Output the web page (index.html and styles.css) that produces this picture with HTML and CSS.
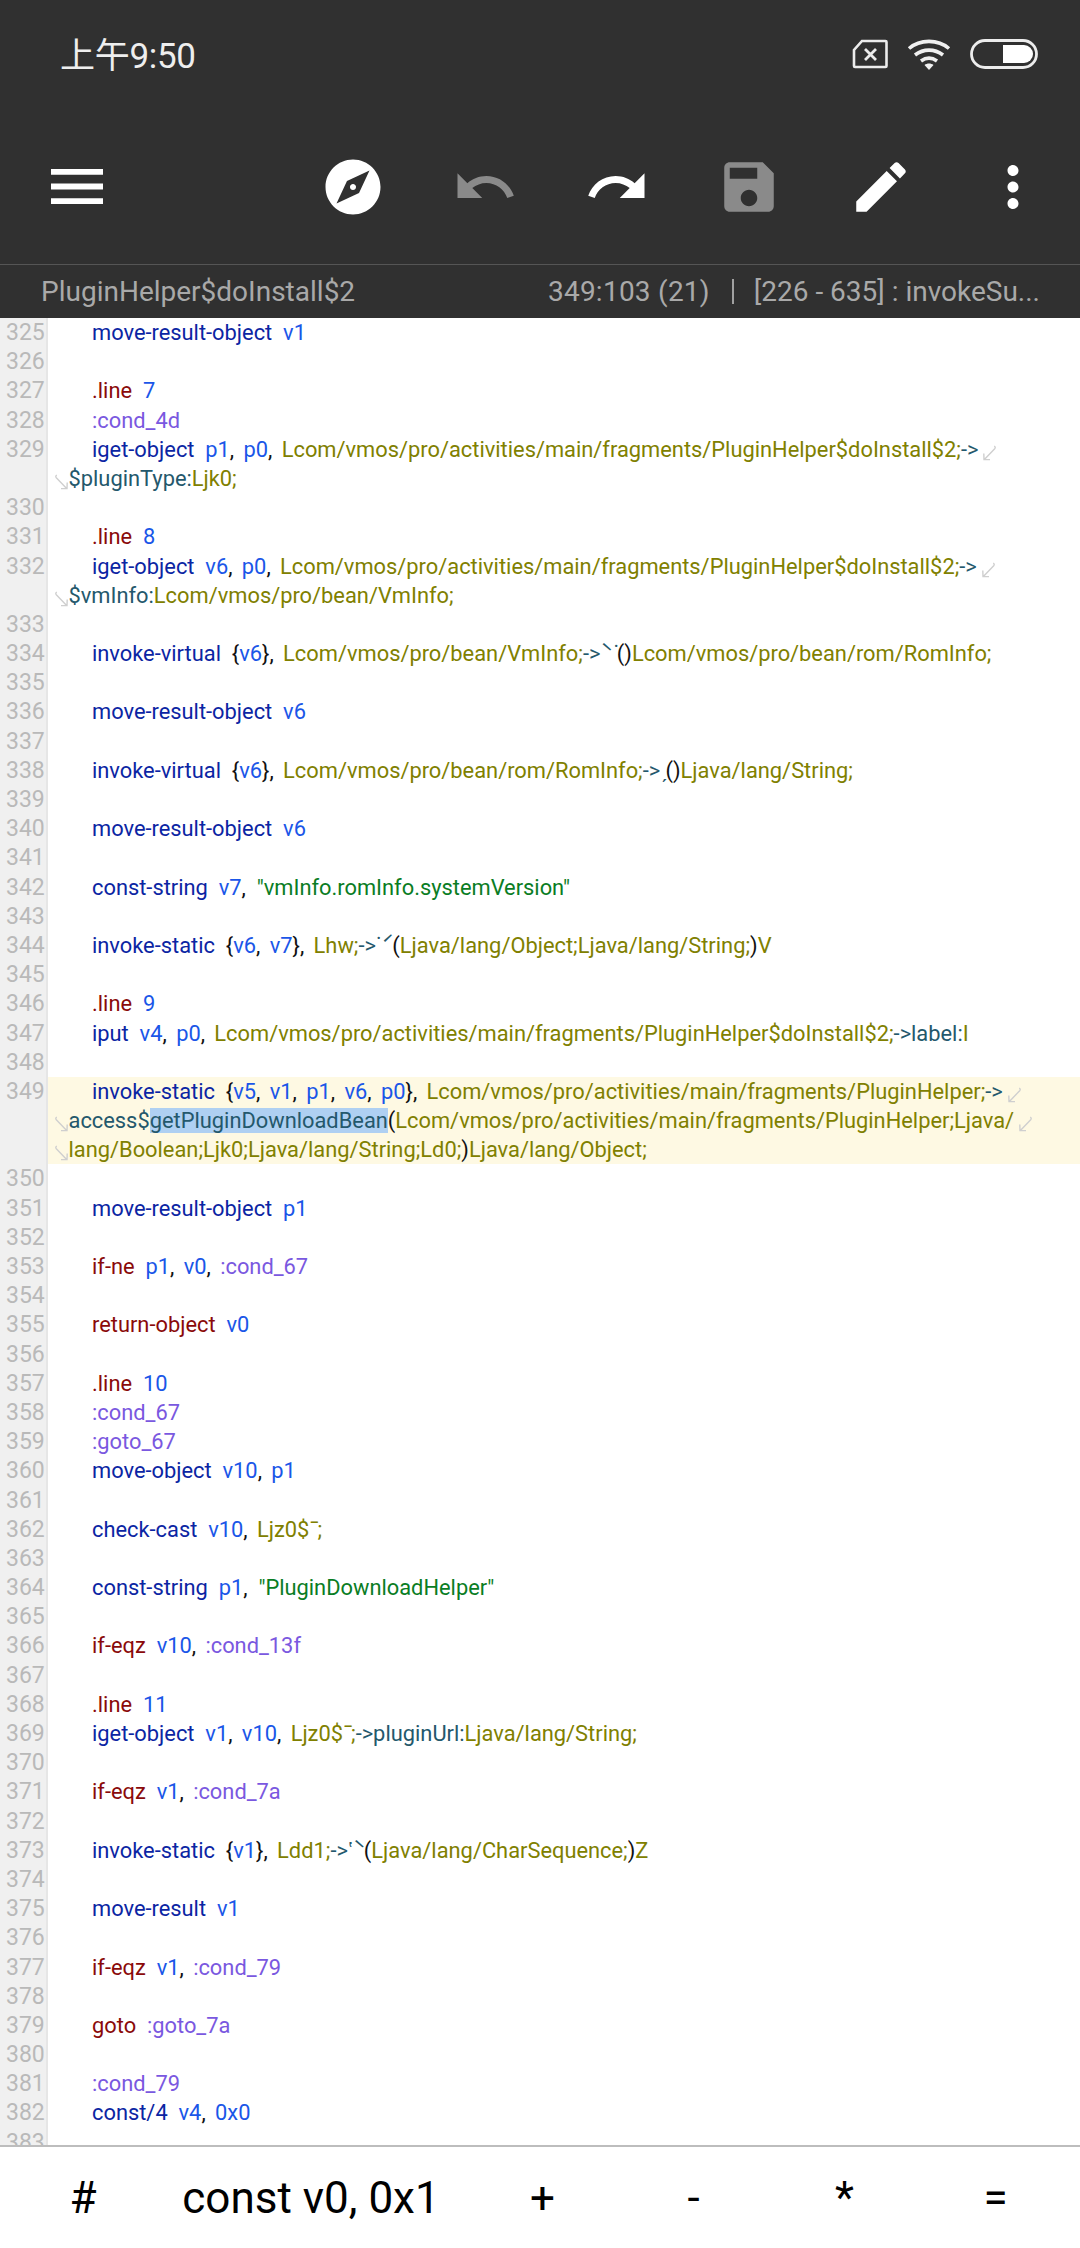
FILE: index.html
```html
<!DOCTYPE html>
<html lang="zh">
<head>
<meta charset="utf-8">
<title>Smali editor</title>
<link rel="stylesheet" href="styles.css">
</head>
<body>
<svg class="defs" width="0" height="0" aria-hidden="true">
<symbol id="wr" viewBox="0 0 14 16"><path d="M12.2 1.2c1.2.5 1.3 1.6.5 2.5L2.6 14.2M1.8 8.6l.2 6h6" fill="none" stroke="#cfcfcf" stroke-width="1.4"/></symbol>
<symbol id="wl" viewBox="0 0 14 16"><path d="M1.8 1.2c-1.2.5-1.3 1.6-.5 2.5l10.100 10.500M12.200 8.600l-.2 6h-6" fill="none" stroke="#cfcfcf" stroke-width="1.400"/></symbol>
</svg>
<div class="app">
  <header class="top">
    <div class="sys">
      <span class="time">上午9:50</span>
      <div class="sys-icons">
        <svg class="i-sim" viewBox="0 0 36 30"><path d="M10 2h23.500a1 1 0 0 1 1 1v24a1 1 0 0 1-1 1H3a1 1 0 0 1-1-1V11z" fill="none" stroke="#ececec" stroke-width="2.600"/><path d="M13 10l11 11M24 10L13 21" stroke="#ececec" stroke-width="2.800"/></svg>
        <svg class="i-wifi" viewBox="0 0 44 32"><g fill="none" stroke="#f0f0f0" stroke-width="3.600"><path d="M2 10.500C13 1 31 1 42 10.500"/><path d="M8 17c8.500-6.500 19.500-6.500 28 0"/><path d="M14 23c5-3.500 11-3.500 16 0"/></g><path d="M22 32l-4.500-5c2.500-2 6.500-2 9 0z" fill="#f0f0f0"/></svg>
        <svg class="i-batt" viewBox="0 0 68 30"><rect x="1.500" y="1.500" width="65" height="27" rx="13.500" fill="none" stroke="#ececec" stroke-width="2.800"/><path d="M33 6h21a9 9 0 0 1 0 18H33z" fill="#fff"/></svg>
      </div>
    </div>
    <nav class="bar">
      <div class="btn menu"><svg class="i-menu" viewBox="0 0 52 36" preserveAspectRatio="none"><path d="M0 0h52v6H0zM0 15h52v6H0zM0 30h52v6H0z" fill="#fff"/></svg></div>
      <div class="actions">
        <div class="btn"><svg class="ico" viewBox="0 0 24 24"><path fill="#fff" d="M12 10.900c-.61 0-1.100.49-1.100 1.100s.49 1.100 1.100 1.100c.61 0 1.100-.49 1.100-1.100s-.49-1.100-1.100-1.100zM12 2C6.480 2 2 6.480 2 12s4.480 10 10 10 10-4.480 10-10S17.520 2 12 2zm2.190 12.190L6 18l3.810-8.190L18 6l-3.810 8.190z"/></svg></div>
        <div class="btn"><svg class="ico" viewBox="0 0 24 24"><path fill="#8a8a8a" d="M12.500 8c-2.650 0-5.050.99-6.900 2.600L2 7v9h9l-3.620-3.620c1.390-1.160 3.160-1.880 5.120-1.880 3.540 0 6.550 2.310 7.600 5.500l2.370-.78C21.080 11.030 17.150 8 12.500 8z"/></svg></div>
        <div class="btn"><svg class="ico" viewBox="0 0 24 24"><path fill="#fff" d="M18.400 10.600C16.550 8.990 14.150 8 11.500 8c-4.650 0-8.580 3.030-9.960 7.220L3.900 16c1.050-3.190 4.050-5.500 7.600-5.500 1.950 0 3.730.72 5.120 1.880L13 16h9V7l-3.600 3.600z"/></svg></div>
        <div class="btn"><svg class="ico" viewBox="0 0 24 24"><path fill="#8a8a8a" d="M17 3H5c-1.110 0-2 .9-2 2v14c0 1.100.89 2 2 2h14c1.100 0 2-.9 2-2V7l-4-4zm-5 16c-1.660 0-3-1.340-3-3s1.340-3 3-3 3 1.340 3 3-1.340 3-3 3zm3-10H5V5h10v4z"/></svg></div>
        <div class="btn"><svg class="ico" viewBox="0 0 24 24"><path fill="#fff" d="M3 17.250V21h3.750L17.810 9.940l-3.750-3.750L3 17.250zM20.710 7.040c.39-.39.39-1.020 0-1.410l-2.340-2.340c-.39-.39-1.020-.39-1.410 0l-1.830 1.830 3.750 3.750 1.830-1.830z"/></svg></div>
        <div class="btn"><svg class="ico" viewBox="0 0 24 24"><path fill="#fff" d="M12 8c1.100 0 2-.9 2-2s-.9-2-2-2-2 .9-2 2 .9 2 2 2zm0 2c-1.100 0-2 .9-2 2s.9 2 2 2 2-.9 2-2-.9-2-2-2zm0 6c-1.100 0-2 .9-2 2s.9 2 2 2 2-.9 2-2-.9-2-2-2z"/></svg></div>
      </div>
    </nav>
    <div class="status">
      <span class="file">PluginHelper$doInstall$2</span>
      <span class="pos">349:103 (21)</span>
      <span class="sep"></span>
      <span class="ctx">[226 - 635] : invokeSu...</span>
    </div>
  </header>
  <main class="editor">
<div class="row"><span class="n">325</span><span class="c"><b class="k">move-result-object</b>  <b class="r">v1</b></span></div>
<div class="row"><span class="n">326</span><span class="c"></span></div>
<div class="row"><span class="n">327</span><span class="c"><b class="d">.line</b>  <b class="r">7</b></span></div>
<div class="row"><span class="n">328</span><span class="c"><b class="l">:cond_4d</b></span></div>
<div class="row"><span class="n">329</span><span class="c"><b class="k">iget-object</b>  <b class="r">p1</b><b class="g">,</b>  <b class="r">p0</b><b class="g">,</b>  <b class="t">Lcom/vmos/pro/activities/main/fragments/PluginHelper$doInstall$2;</b><b class="m">-&gt;</b><svg class="wr"><use href="#wr"/></svg></span></div>
<div class="row"><span class="n"></span><span class="w"><svg class="wl"><use href="#wl"/></svg><b class="m">$pluginType:</b><b class="t">Ljk0;</b></span></div>
<div class="row"><span class="n">330</span><span class="c"></span></div>
<div class="row"><span class="n">331</span><span class="c"><b class="d">.line</b>  <b class="r">8</b></span></div>
<div class="row"><span class="n">332</span><span class="c"><b class="k">iget-object</b>  <b class="r">v6</b><b class="g">,</b>  <b class="r">p0</b><b class="g">,</b>  <b class="t">Lcom/vmos/pro/activities/main/fragments/PluginHelper$doInstall$2;</b><b class="m">-&gt;</b><svg class="wr"><use href="#wr"/></svg></span></div>
<div class="row"><span class="n"></span><span class="w"><svg class="wl"><use href="#wl"/></svg><b class="m">$vmInfo:</b><b class="t">Lcom/vmos/pro/bean/VmInfo;</b></span></div>
<div class="row"><span class="n">333</span><span class="c"></span></div>
<div class="row"><span class="n">334</span><span class="c"><b class="k">invoke-virtual</b>  {<b class="r">v6</b>}<b class="g">,</b>  <b class="t">Lcom/vmos/pro/bean/VmInfo;</b><b class="m">-&gt;<i class="mk">ˋ˙</i></b>()<b class="t">Lcom/vmos/pro/bean/rom/RomInfo;</b></span></div>
<div class="row"><span class="n">335</span><span class="c"></span></div>
<div class="row"><span class="n">336</span><span class="c"><b class="k">move-result-object</b>  <b class="r">v6</b></span></div>
<div class="row"><span class="n">337</span><span class="c"></span></div>
<div class="row"><span class="n">338</span><span class="c"><b class="k">invoke-virtual</b>  {<b class="r">v6</b>}<b class="g">,</b>  <b class="t">Lcom/vmos/pro/bean/rom/RomInfo;</b><b class="m">-&gt;<i class="mk">ˏ</i></b>()<b class="t">Ljava/lang/String;</b></span></div>
<div class="row"><span class="n">339</span><span class="c"></span></div>
<div class="row"><span class="n">340</span><span class="c"><b class="k">move-result-object</b>  <b class="r">v6</b></span></div>
<div class="row"><span class="n">341</span><span class="c"></span></div>
<div class="row"><span class="n">342</span><span class="c"><b class="k">const-string</b>  <b class="r">v7</b>,  <b class="s">"vmInfo.romInfo.systemVersion"</b></span></div>
<div class="row"><span class="n">343</span><span class="c"></span></div>
<div class="row"><span class="n">344</span><span class="c"><b class="k">invoke-static</b>  {<b class="r">v6</b><b class="g">,</b>  <b class="r">v7</b>}<b class="g">,</b>  <b class="t">Lhw;</b><b class="m">-&gt;<i class="mk">˙ˊ</i></b>(<b class="t">Ljava/lang/Object;Ljava/lang/String;</b>)<b class="t">V</b></span></div>
<div class="row"><span class="n">345</span><span class="c"></span></div>
<div class="row"><span class="n">346</span><span class="c"><b class="d">.line</b>  <b class="r">9</b></span></div>
<div class="row"><span class="n">347</span><span class="c"><b class="k">iput</b>  <b class="r">v4</b><b class="g">,</b>  <b class="r">p0</b><b class="g">,</b>  <b class="t">Lcom/vmos/pro/activities/main/fragments/PluginHelper$doInstall$2;</b><b class="m">-&gt;label:</b><b class="t">I</b></span></div>
<div class="row"><span class="n">348</span><span class="c"></span></div>
<div class="row"><span class="n">349</span><span class="c hl"><b class="k">invoke-static</b>  {<b class="r">v5</b><b class="g">,</b>  <b class="r">v1</b><b class="g">,</b>  <b class="r">p1</b><b class="g">,</b>  <b class="r">v6</b><b class="g">,</b>  <b class="r">p0</b>}<b class="g">,</b>  <b class="t">Lcom/vmos/pro/activities/main/fragments/PluginHelper;</b><b class="m">-&gt;</b><svg class="wr"><use href="#wr"/></svg></span></div>
<div class="row"><span class="n"></span><span class="w hl"><svg class="wl"><use href="#wl"/></svg><b class="m">access$<i class="sel">getPluginDownloadBean</i></b>(<b class="t">Lcom/vmos/pro/activities/main/fragments/PluginHelper;Ljava/</b><svg class="wr"><use href="#wr"/></svg></span></div>
<div class="row"><span class="n"></span><span class="w hl"><svg class="wl"><use href="#wl"/></svg><b class="t">lang/Boolean;Ljk0;Ljava/lang/String;Ld0;</b>)<b class="t">Ljava/lang/Object;</b></span></div>
<div class="row"><span class="n">350</span><span class="c"></span></div>
<div class="row"><span class="n">351</span><span class="c"><b class="k">move-result-object</b>  <b class="r">p1</b></span></div>
<div class="row"><span class="n">352</span><span class="c"></span></div>
<div class="row"><span class="n">353</span><span class="c"><b class="d">if-ne</b>  <b class="r">p1</b><b class="g">,</b>  <b class="r">v0</b><b class="g">,</b>  <b class="l">:cond_67</b></span></div>
<div class="row"><span class="n">354</span><span class="c"></span></div>
<div class="row"><span class="n">355</span><span class="c"><b class="d">return-object</b>  <b class="r">v0</b></span></div>
<div class="row"><span class="n">356</span><span class="c"></span></div>
<div class="row"><span class="n">357</span><span class="c"><b class="d">.line</b>  <b class="r">10</b></span></div>
<div class="row"><span class="n">358</span><span class="c"><b class="l">:cond_67</b></span></div>
<div class="row"><span class="n">359</span><span class="c"><b class="l">:goto_67</b></span></div>
<div class="row"><span class="n">360</span><span class="c"><b class="k">move-object</b>  <b class="r">v10</b><b class="g">,</b>  <b class="r">p1</b></span></div>
<div class="row"><span class="n">361</span><span class="c"></span></div>
<div class="row"><span class="n">362</span><span class="c"><b class="k">check-cast</b>  <b class="r">v10</b><b class="g">,</b>  <b class="t">Ljz0$<i class="mk">¯</i>;</b></span></div>
<div class="row"><span class="n">363</span><span class="c"></span></div>
<div class="row"><span class="n">364</span><span class="c"><b class="k">const-string</b>  <b class="r">p1</b>,  <b class="s">"PluginDownloadHelper"</b></span></div>
<div class="row"><span class="n">365</span><span class="c"></span></div>
<div class="row"><span class="n">366</span><span class="c"><b class="d">if-eqz</b>  <b class="r">v10</b><b class="g">,</b>  <b class="l">:cond_13f</b></span></div>
<div class="row"><span class="n">367</span><span class="c"></span></div>
<div class="row"><span class="n">368</span><span class="c"><b class="d">.line</b>  <b class="r">11</b></span></div>
<div class="row"><span class="n">369</span><span class="c"><b class="k">iget-object</b>  <b class="r">v1</b><b class="g">,</b>  <b class="r">v10</b><b class="g">,</b>  <b class="t">Ljz0$<i class="mk">¯</i>;</b><b class="m">-&gt;pluginUrl:</b><b class="t">Ljava/lang/String;</b></span></div>
<div class="row"><span class="n">370</span><span class="c"></span></div>
<div class="row"><span class="n">371</span><span class="c"><b class="d">if-eqz</b>  <b class="r">v1</b><b class="g">,</b>  <b class="l">:cond_7a</b></span></div>
<div class="row"><span class="n">372</span><span class="c"></span></div>
<div class="row"><span class="n">373</span><span class="c"><b class="k">invoke-static</b>  {<b class="r">v1</b>}<b class="g">,</b>  <b class="t">Ldd1;</b><b class="m">-&gt;<i class="mk">ʽˋ</i></b>(<b class="t">Ljava/lang/CharSequence;</b>)<b class="t">Z</b></span></div>
<div class="row"><span class="n">374</span><span class="c"></span></div>
<div class="row"><span class="n">375</span><span class="c"><b class="k">move-result</b>  <b class="r">v1</b></span></div>
<div class="row"><span class="n">376</span><span class="c"></span></div>
<div class="row"><span class="n">377</span><span class="c"><b class="d">if-eqz</b>  <b class="r">v1</b><b class="g">,</b>  <b class="l">:cond_79</b></span></div>
<div class="row"><span class="n">378</span><span class="c"></span></div>
<div class="row"><span class="n">379</span><span class="c"><b class="d">goto</b>  <b class="l">:goto_7a</b></span></div>
<div class="row"><span class="n">380</span><span class="c"></span></div>
<div class="row"><span class="n">381</span><span class="c"><b class="l">:cond_79</b></span></div>
<div class="row"><span class="n">382</span><span class="c"><b class="k">const/4</b>  <b class="r">v4</b><b class="g">,</b>  <b class="r">0x0</b></span></div>
<div class="row"><span class="n">383</span><span class="c"></span></div>
  </main>
  <footer class="keys">
    <span class="key">#</span>
    <span class="key wide">const v0, 0x1</span>
    <span class="key">+</span>
    <span class="key">-</span>
    <span class="key">*</span>
    <span class="key">=</span>
  </footer>
</div>
</body>
</html>
```

FILE: styles.css
```css
* { box-sizing: border-box; }
html, body { margin: 0; padding: 0; background: #fff; }
body { font-family: Roboto, "Noto Sans CJK SC", sans-serif; }
.defs { display: block; height: 0; width: 0; }
.app { width: 1080px; height: 2248px; display: flex; flex-direction: column; overflow: hidden; }

.top { background: #303030; flex: none; }
.sys { height: 112px; padding: 0 42px 0 60px; display: flex; justify-content: space-between; align-items: flex-start; }
.time { margin-top: 35px; font-size: 35px; line-height: 44px; color: #eee; letter-spacing: -.3px; }
.sys-icons { display: flex; align-items: flex-start; padding-top: 38px; }
.i-sim { width: 36px; height: 30px; margin-top: 1px; }
.i-wifi { width: 44px; height: 32px; margin-left: 19px; }
.i-batt { width: 68px; height: 30px; margin-left: 19px; margin-top: 1px; }

.bar { height: 152px; display: flex; align-items: center; justify-content: space-between; padding-bottom: 2px; }
.btn { width: 132px; height: 132px; display: flex; align-items: center; justify-content: center; }
.menu { width: 154px; margin-top: -2px; }
.actions { display: flex; margin-right: 1px; }
.ico { width: 66px; height: 66px; }
.i-menu { width: 52px; height: 35px; }

.status { height: 54px; border-top: 1px solid #555; display: flex; align-items: center; padding: 0 40px 0 41px; color: #a9a9a9; font-size: 28px; white-space: nowrap; }
.file { flex: 1; }
.pos { letter-spacing: .25px; }
.sep { width: 2px; height: 25px; background: #a0a0a0; margin: 0 20px 0 22px; }

.editor { flex: 1; min-height: 0; overflow: hidden; font-size: 21.85px; line-height: 29.19px; color: #111; }
.row { display: flex; height: 29.19px; white-space: pre; }
.n { flex: none; width: 48px; padding-left: 6px; background: #f0f0f0; border-right: 2px solid #e6e6e6; color: #b9b9b9; font-size: 23px; }
.c, .w { flex: 1; min-width: 0; }
.c { padding-left: 44px; }
.w { padding-left: 6.5px; }
.hl { background: #fef9e3; }
b, i { font-weight: 400; font-style: normal; }
.k { color: #0b25a3; }
.r { color: #1a56e8; }
.d { color: #8a0a0a; }
.l { color: #7a58e0; }
.t { color: #808000; }
.m { color: #24586c; }
.s { color: #0a7d24; }
.g { margin-right: -1.5px; }
.mk { margin-right: -2px; }
.sel { background: #afd0f2; }
.wr, .wl { width: 14px; height: 16px; vertical-align: -4px; }
.wr { margin-left: 4px; }

.keys { flex: none; height: 103px; border-top: 2px solid #bdbdbd; display: grid; grid-template-columns: 166px 301px repeat(4, 151px); align-items: center; font-size: 44px; color: #000; background: #fff; }
.key { text-align: center; }
.key.wide { padding-right: 11px; }
```
